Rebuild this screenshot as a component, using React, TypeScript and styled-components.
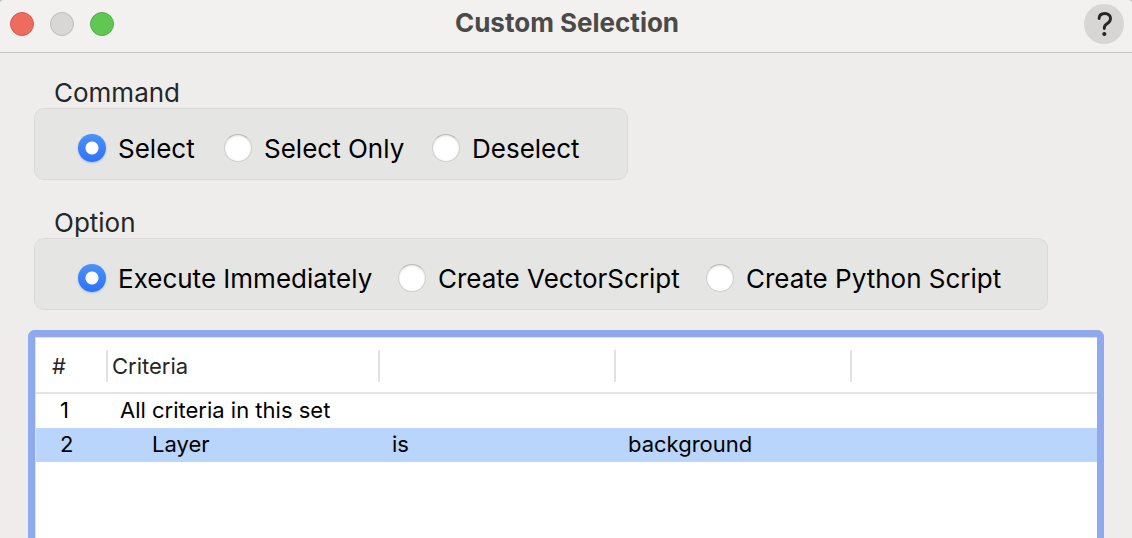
import React, { useState } from "react";
import styled, { createGlobalStyle } from "styled-components";

const GlobalStyle = createGlobalStyle`
  * { box-sizing: border-box; }
  body {
    margin: 0;
    background: #b8b8b8;
    font-family: Inter, "Liberation Sans", sans-serif;
    color: #000;
  }
`;

const Window = styled.div`
  display: flex;
  flex-direction: column;
  min-height: 100vh;
  background: #eeedeb;
  border-radius: 4px 4px 0 0;
  overflow: hidden;
`;

const TitleBar = styled.header`
  display: grid;
  grid-template-columns: 1fr auto 1fr;
  align-items: center;
  height: 53px;
  padding: 0 8px 4px 10px;
  background: #f2f1ef;
  border-bottom: 1px solid #c5c4c2;
`;

const Lights = styled.div`
  display: flex;
  gap: 16px;
`;

const Light = styled.button<{ $fill: string; $edge: string }>`
  width: 24px;
  height: 24px;
  padding: 0;
  border-radius: 50%;
  border: 1px solid ${(p) => p.$edge};
  background: ${(p) => p.$fill};
`;

const Title = styled.h1`
  margin: 0;
  padding-bottom: 2px;
  font-size: 26px;
  line-height: 32px;
  font-weight: 700;
  color: #4a4a49;
`;

const HelpButton = styled.button`
  display: flex;
  align-items: center;
  justify-content: center;
  justify-self: end;
  width: 40px;
  height: 40px;
  padding: 0;
  border: 0;
  border-radius: 50%;
  background: #d7d6d4;
  color: #262626;
`;

const Form = styled.main`
  display: flex;
  flex-direction: column;
  flex: 1;
  padding: 25px 28px 0;
`;

const Group = styled.fieldset`
  margin: 0 6px 28px;
  padding: 0;
  border: 0;
  min-width: 0;
`;

const Legend = styled.legend`
  padding: 0 20px;
  font-size: 26px;
  line-height: 30px;
  color: #262626;
`;

const Choices = styled.div`
  display: flex;
  width: fit-content;
  height: 72px;
  padding: 8px 49px 0 43px;
  border: 1px solid #dbdad8;
  border-radius: 10px;
  background: #e5e5e3;
`;

const Choice = styled.label<{ $width: number }>`
  display: flex;
  align-items: center;
  gap: 12px;
  width: ${(p) => p.$width}px;
  font-size: 26px;
  line-height: 32px;
  white-space: nowrap;
`;

const ChoiceText = styled.span`
  padding-top: 2px;
`;

const Radio = styled.input`
  appearance: none;
  flex: none;
  width: 28px;
  height: 28px;
  margin: 0;
  border-radius: 50%;
  border: 1px solid #cfcfcd;
  border-top-color: #b9b9b7;
  background: #fff;
  box-shadow: inset 0 1px 2px rgba(0, 0, 0, 0.12);

  &:checked {
    border: 0;
    background:
      radial-gradient(circle, #fff 0 6px, transparent 7px),
      linear-gradient(#4a92f8, #2f72f6);
    box-shadow: 0 1px 2px rgba(47, 114, 246, 0.35);
  }
`;

const ListFrame = styled.div`
  flex: 1;
  margin-top: -8px;
  border: 7px solid #8eaaec;
  border-bottom: 0;
  border-radius: 7px 7px 0 0;
  background: #fff;
  box-shadow: inset 1px 1px 0 #d5dff6;
  padding: 1px 0 0 1px;
`;

const Table = styled.table`
  width: 100%;
  table-layout: fixed;
  border-collapse: separate;
  border-spacing: 0;
  font-size: 22px;
  line-height: 32px;
`;

const Col = styled.col<{ $width?: number }>`
  width: ${(p) => (p.$width ? `${p.$width}px` : "auto")};
`;

const HeadCell = styled.th`
  height: 56px;
  padding: 2px 0 0;
  border-bottom: 2px solid #e4e4e4;
  font-weight: 400;
  text-align: left;
  color: #262626;
`;

const HeadLabel = styled.div<{ $first?: boolean }>`
  height: 32px;
  padding-left: ${(p) => (p.$first ? 14 : 4)}px;
  border-left: 2px solid ${(p) => (p.$first ? "transparent" : "#e2e2e2")};
`;

const Row = styled.tr<{ $selected?: boolean }>`
  background: ${(p) => (p.$selected ? "#b9d5fb" : "#fff")};
`;

const Cell = styled.td<{ $indent?: number }>`
  height: 34px;
  padding: 0 0 2px ${(p) => p.$indent ?? 14}px;
  white-space: nowrap;
`;

type Option = { label: string; width: number };

const commands: Option[] = [
  { label: "Select", width: 146 },
  { label: "Select Only", width: 208 },
  { label: "Deselect", width: 146 },
];

const options: Option[] = [
  { label: "Execute Immediately", width: 320 },
  { label: "Create VectorScript", width: 308 },
  { label: "Create Python Script", width: 292 },
];

function RadioGroup({ title, items }: { title: string; items: Option[] }) {
  const [value, setValue] = useState(items[0].label);
  return (
    <Group>
      <Legend>{title}</Legend>
      <Choices>
        {items.map((item) => (
          <Choice key={item.label} $width={item.width}>
            <Radio
              type="radio"
              name={title}
              checked={value === item.label}
              onChange={() => setValue(item.label)}
            />
            <ChoiceText>{item.label}</ChoiceText>
          </Choice>
        ))}
      </Choices>
    </Group>
  );
}

export default function App() {
  return (
    <>
      <GlobalStyle />
      <Window>
        <TitleBar>
          <Lights>
            <Light aria-label="Close" $fill="#ed6b5f" $edge="#d9574c" />
            <Light aria-label="Minimize" $fill="#d8d7d5" $edge="#bcbbb9" />
            <Light aria-label="Zoom" $fill="#62c655" $edge="#50ae43" />
          </Lights>
          <Title>Custom Selection</Title>
          <HelpButton aria-label="Help">
            <svg width="40" height="40" viewBox="0 0 40 40" fill="none">
              <path
                d="M15.1 14.5C15.3 11.3 17.5 9.5 20.8 9.5C24.2 9.5 26.5 11.6 26.5 14.6C26.5 17 25.3 18.3 23.3 19.5C21.2 20.8 20.3 21.9 20.3 24V24.6"
                stroke="currentColor"
                strokeWidth="2.9"
                strokeLinecap="round"
                strokeLinejoin="round"
              />
              <circle cx="20.3" cy="30" r="2.1" fill="currentColor" />
            </svg>
          </HelpButton>
        </TitleBar>
        <Form>
          <RadioGroup title="Command" items={commands} />
          <RadioGroup title="Option" items={options} />
          <ListFrame>
            <Table>
              <colgroup>
                <Col $width={70} />
                <Col $width={272} />
                <Col $width={236} />
                <Col $width={236} />
                <Col />
              </colgroup>
              <thead>
                <tr>
                  <HeadCell><HeadLabel $first>#</HeadLabel></HeadCell>
                  <HeadCell><HeadLabel>Criteria</HeadLabel></HeadCell>
                  <HeadCell><HeadLabel /></HeadCell>
                  <HeadCell><HeadLabel /></HeadCell>
                  <HeadCell><HeadLabel /></HeadCell>
                </tr>
              </thead>
              <tbody>
                <Row>
                  <Cell $indent={24}>1</Cell>
                  <Cell>All criteria in this set</Cell>
                  <Cell />
                  <Cell />
                  <Cell />
                </Row>
                <Row $selected>
                  <Cell $indent={24}>2</Cell>
                  <Cell $indent={46}>Layer</Cell>
                  <Cell>is</Cell>
                  <Cell>background</Cell>
                  <Cell />
                </Row>
              </tbody>
            </Table>
          </ListFrame>
        </Form>
      </Window>
    </>
  );
}
